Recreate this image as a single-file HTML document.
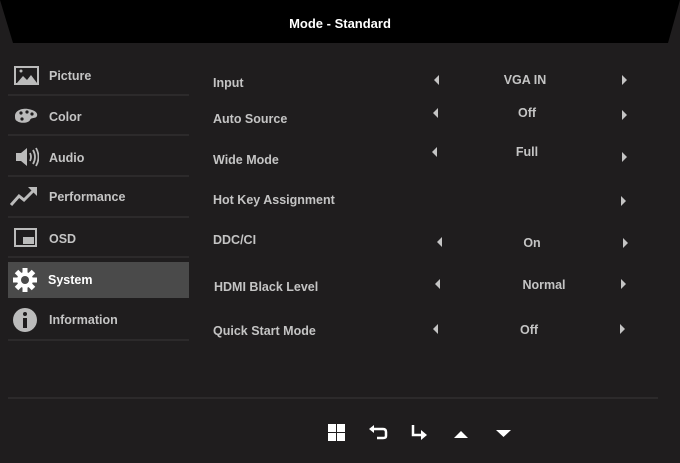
<!DOCTYPE html>
<html><head><meta charset="utf-8"><style>
body{margin:0;width:680px;height:463px;background:#1f1d1e;overflow:hidden;position:relative;font-family:"Liberation Sans",sans-serif;font-weight:bold;color:#c4c4c4;font-size:12.5px}
.a{position:absolute;white-space:nowrap}
.sep{position:absolute;left:8px;width:181px;height:2px;background:#2c2a2b}
.m{position:absolute;left:49px;transform:translateY(-50%);margin-top:1px}
.l{position:absolute;left:213px;transform:translateY(-50%);margin-top:1px}
.v{position:absolute;transform:translate(-50%,-50%);margin-top:1px}
.la,.ra{position:absolute;width:0;height:0;border-top:5px solid transparent;border-bottom:5px solid transparent;transform:translateY(-50%)}
.la{border-right:5px solid #c4c4c4}
.ra{border-left:5px solid #c4c4c4}
</style></head><body>
<svg class="a" style="left:0;top:0" width="680" height="46"><polygon points="0,0 680,0 668,43 13,43" fill="#000"/></svg>
<div class="a" style="left:0;width:680px;top:16px;text-align:center;color:#fff;font-size:13px">Mode - Standard</div>

<div class="a" style="left:8px;top:262px;width:181px;height:36px;background:#4a4a4a"></div>
<div class="sep" style="top:94px"></div><div class="sep" style="top:134px"></div><div class="sep" style="top:175px"></div><div class="sep" style="top:216px"></div><div class="sep" style="top:256px"></div><div class="sep" style="top:339px"></div>

<svg class="a" style="left:14px;top:66px" width="26" height="20"><rect x="1" y="1" width="23" height="17" fill="none" stroke="#bbb" stroke-width="2"/><path d="M3 17 L9 10 L13 14 L17 9 L23 17Z" fill="#bbb"/><circle cx="7" cy="5" r="1.5" fill="#bbb"/></svg>
<svg class="a" style="left:13px;top:108px" width="26" height="16"><path d="M2 8 C2 2 10 0 15 1 C22 2 25 5 24 8 C23 11 18 9 17 12 C16 15 8 16 4 13 C2 12 2 10 2 8Z" fill="#bbb"/><circle cx="8" cy="5" r="1.6" fill="#1f1d1e"/><circle cx="14" cy="4" r="1.6" fill="#1f1d1e"/><circle cx="19" cy="6" r="1.6" fill="#1f1d1e"/><circle cx="9" cy="11" r="1.6" fill="#1f1d1e"/></svg>
<svg class="a" style="left:15px;top:146px" width="24" height="22"><path d="M1 7 H6 L12 2 V20 L6 15 H1Z" fill="#bbb"/><path d="M15 7 Q17 11 15 15 M18 4 Q22 11 18 18 M21 2 Q26 11 21 20" stroke="#bbb" stroke-width="1.8" fill="none"/></svg>
<svg class="a" style="left:10px;top:185px" width="28" height="22"><path d="M1 20 L9 11 L14 15 L24 5" stroke="#bbb" stroke-width="3" fill="none"/><path d="M18 2 H27 V11Z" fill="#bbb"/></svg>
<svg class="a" style="left:14px;top:228px" width="24" height="20"><rect x="1" y="1" width="21" height="17" fill="none" stroke="#bbb" stroke-width="2"/><rect x="9" y="9" width="11" height="7" fill="#bbb"/></svg>
<svg class="a" style="left:12px;top:267px" width="26" height="26" viewBox="0 0 26 26"><g fill="#fff"><circle cx="13" cy="13" r="8"/><rect x="10.5" y="1" width="5" height="24"/><rect x="1" y="10.5" width="24" height="5"/><rect x="10.5" y="1" width="5" height="24" transform="rotate(45 13 13)"/><rect x="10.5" y="1" width="5" height="24" transform="rotate(-45 13 13)"/></g><circle cx="13" cy="13" r="4" fill="#4a4a4a"/></svg>
<svg class="a" style="left:12px;top:307px" width="26" height="26"><circle cx="13" cy="13" r="12" fill="#bbb"/><circle cx="13" cy="7" r="2" fill="#1f1d1e"/><rect x="11" y="11" width="4" height="10" fill="#1f1d1e"/></svg>

<div class="m" style="top:75px">Picture</div>
<div class="m" style="top:116px">Color</div>
<div class="m" style="top:157px">Audio</div>
<div class="m" style="top:196px">Performance</div>
<div class="m" style="top:238px">OSD</div>
<div class="m" style="top:279px;left:48px;color:#fff">System</div>
<div class="m" style="top:319px">Information</div>

<div class="l" style="top:82px">Input</div>
<div class="l" style="top:118px">Auto Source</div>
<div class="l" style="top:159px">Wide Mode</div>
<div class="l" style="top:199px">Hot Key Assignment</div>
<div class="l" style="top:239px">DDC/CI</div>
<div class="l" style="top:286px;left:214px">HDMI Black Level</div>
<div class="l" style="top:330px">Quick Start Mode</div>

<div class="la" style="left:434px;top:80px"></div><div class="v" style="left:525px;top:79px">VGA IN</div><div class="ra" style="left:622px;top:80px"></div>
<div class="la" style="left:433px;top:113px"></div><div class="v" style="left:527px;top:112px">Off</div><div class="ra" style="left:622px;top:115px"></div>
<div class="la" style="left:432px;top:152px"></div><div class="v" style="left:527px;top:151px">Full</div><div class="ra" style="left:622px;top:157px"></div>
<div class="ra" style="left:621px;top:201px"></div>
<div class="la" style="left:437px;top:242px"></div><div class="v" style="left:532px;top:242px">On</div><div class="ra" style="left:623px;top:243px"></div>
<div class="la" style="left:435px;top:284px"></div><div class="v" style="left:544px;top:284px">Normal</div><div class="ra" style="left:621px;top:284px"></div>
<div class="la" style="left:433px;top:329px"></div><div class="v" style="left:529px;top:329px">Off</div><div class="ra" style="left:620px;top:329px"></div>

<div class="a" style="left:8px;top:397px;width:650px;height:2px;background:#2c2a2b"></div>
<svg class="a" style="left:326px;top:422px" width="200" height="22">
<g fill="#fff"><rect x="2" y="2" width="8" height="8"/><rect x="11" y="2" width="8" height="8"/><rect x="2" y="11" width="8" height="8"/><rect x="11" y="11" width="8" height="8"/></g>
<path d="M48 7 H57 Q60 7 60 10 V14 Q60 16 57 16 H51" stroke="#fff" stroke-width="2.5" fill="none"/><path d="M43 7 L48 3 V11Z" fill="#fff"/>
<path d="M87 3 V13 H96" stroke="#fff" stroke-width="2.5" fill="none"/><path d="M101 13 L95 8 V18Z" fill="#fff"/>
<path d="M128 16 L135 9 L142 16Z" fill="#fff"/>
<path d="M170 8 L185 8 L177.5 15Z" fill="#fff"/>
</svg>
</body></html>
